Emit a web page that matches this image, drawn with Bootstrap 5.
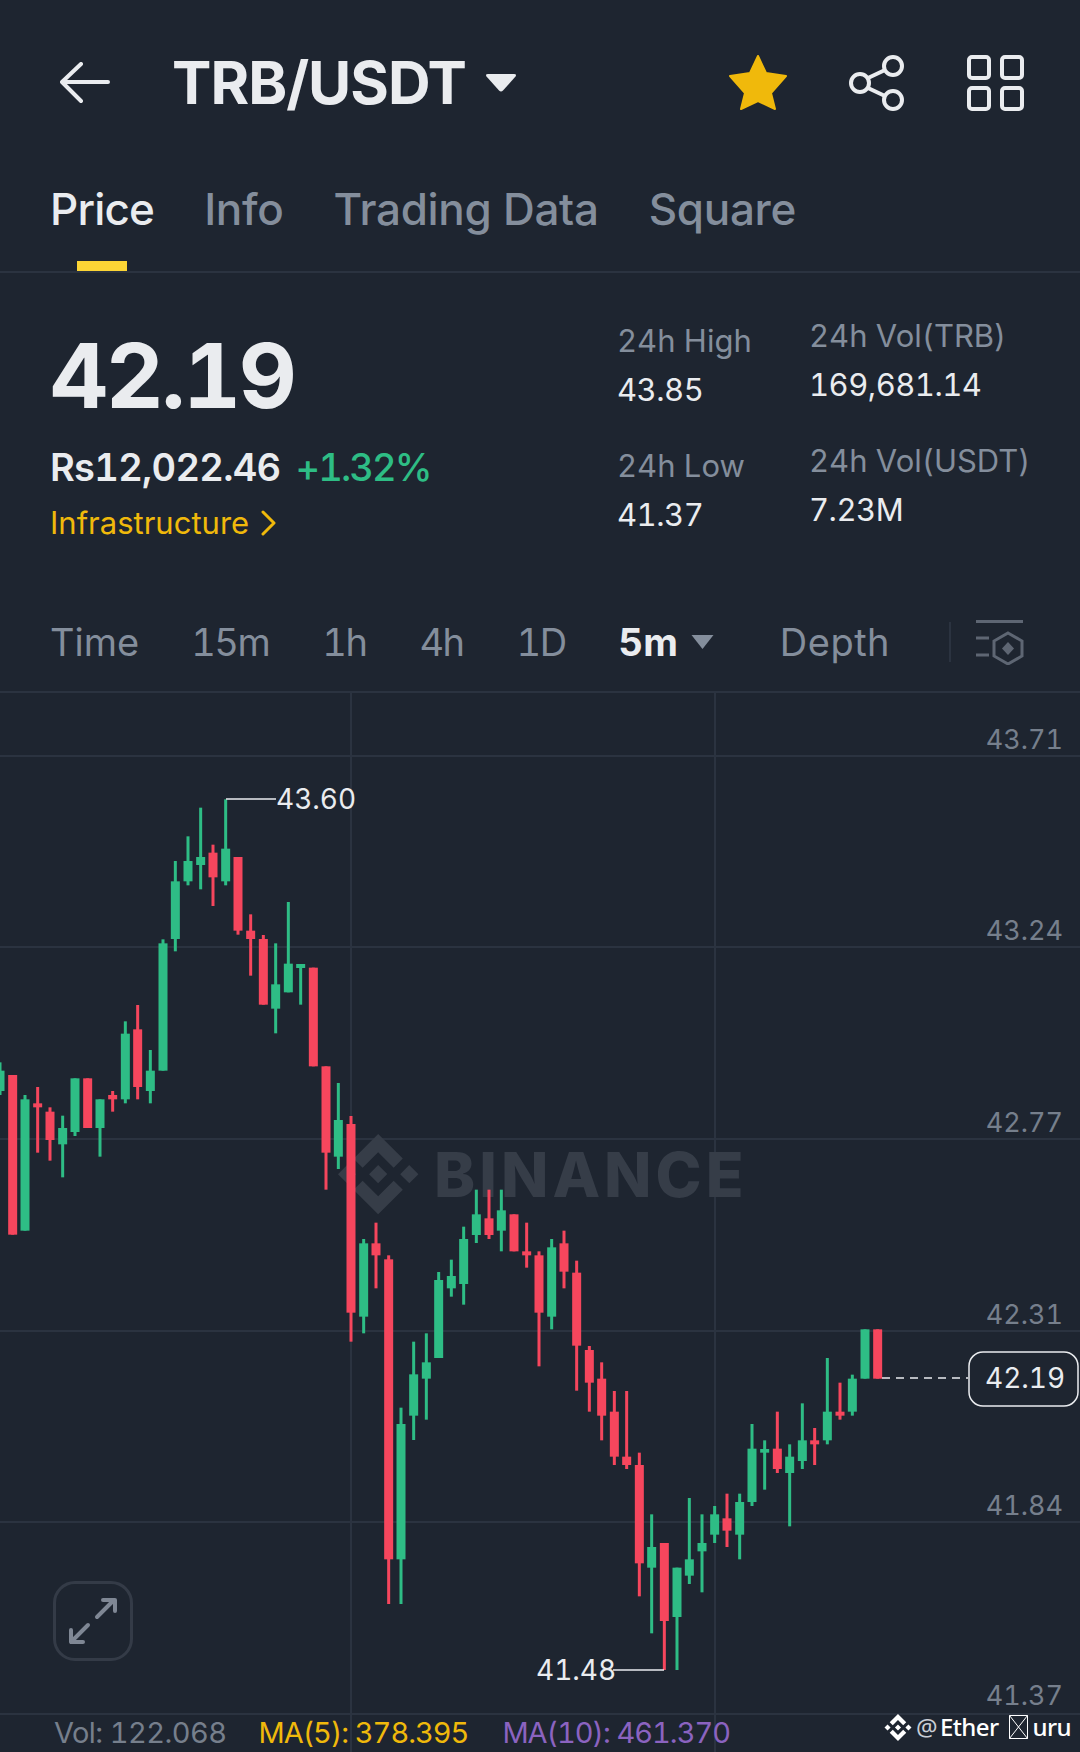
<!DOCTYPE html>
<html lang="en">
<head>
  <meta charset="UTF-8">
  <title>TRB/USDT</title>
  <link href="https://cdn.jsdelivr.net/npm/bootstrap@5.3.3/dist/css/bootstrap.min.css" rel="stylesheet">
  <style>
    html, body { margin: 0; background: #1e2530; }
    body { width: 1080px; height: 1752px; overflow: hidden; font-family: Inter, "Noto Sans", sans-serif; color: #eaecef; font-variant-numeric: tabular-nums; }
    svg { display: block; }
    .top-head { height: 166px; padding: 0 56px 0 60px; }
    .pair-name { font-size: 59px; line-height: 60px; font-weight: 700; letter-spacing: -1px; margin-left: 62px; }
    .pair-caret { margin-left: 20px; }
    .head-gap { margin-left: 60px; }
    .tab-strip { height: 107px; border-bottom: 2px solid #2b3340; padding-left: 50px; gap: 50px; }
    .tab-item { font-size: 44px; line-height: 52px; font-weight: 500; color: #848e9c; position: relative; height: 105px; padding-top: 17px; letter-spacing: -.3px; }
    .tab-item.on { color: #eaecef; letter-spacing: -.8px; }
    .tab-item.on::after { content: ""; position: absolute; left: 27px; bottom: 0; width: 50px; height: 10px; background: #fcd535; }
    .stat-wrap { height: 320px; padding: 0 0 0 50px; }
    .price-col { width: 567px; padding-top: 59px; }
    .big-price { font-size: 90px; line-height: 88px; font-weight: 700; letter-spacing: -2.5px; }
    .sub-line { font-size: 38px; line-height: 46px; margin-top: 24px; font-weight: 600; letter-spacing: -.7px; }
    .sub-line .up { color: #2ebd85; font-weight: 500; margin-left: 15px; letter-spacing: -1.9px; }
    .cat-link { color: #f0b90b; font-size: 31px; line-height: 40px; margin-top: 13px; gap: 12px; }
    .stat-one { width: 192px; padding-top: 48px; }
    .stat-two { padding-top: 43px; }
    .stat-label { color: #848e9c; font-size: 31px; line-height: 40px; }
    .stat-val { color: #eaecef; font-size: 31px; line-height: 40px; margin: 9px 0 36px; letter-spacing: -.5px; }
    .range-row { height: 100px; border-bottom: 2px solid #2b3340; padding-left: 50px; position: relative; }
    .range-item { color: #848e9c; font-size: 38px; line-height: 46px; white-space: nowrap; }
    .range-item.on { color: #eaecef; font-weight: 700; }
    .range-row .gap-time { margin-right: 52px; }
    .range-row .gap-num { margin-right: 53px; letter-spacing: -1.5px; }
    .range-caret { margin: 0 66px 0 13px; }
    .range-item.depth-link { letter-spacing: .5px; }
    .range-sep { width: 2px; height: 40px; background: #2b3340; margin: 0 25px 0 59px; }
    .chart-wrap { position: relative; height: 1059px; }
    .chart-svg { position: absolute; left: 0; top: 0; }
    .axis-txt { fill: #767f8c; font-size: 27px; font-family: Inter, sans-serif; }
    .mark-txt { fill: #eaecef; font-size: 28px; font-family: Inter, sans-serif; }
    .brand-word { fill: #363d48; font-size: 62px; font-weight: 800; letter-spacing: 4px; font-family: Inter, sans-serif; }
    .zoom-btn { position: absolute; left: 53px; top: 888px; width: 80px; height: 80px; border: 3px solid #343b47; border-radius: 22px; padding: 0; }
    .legend-row { position: absolute; left: 54px; bottom: 0; height: 38px; font-size: 29px; line-height: 38px; gap: 32px; white-space: nowrap; }
    .leg-vol { color: #767f8c; letter-spacing: -.55px; }
    .leg-five { color: #f0b90b; letter-spacing: -1px; }
    .leg-ten { color: #8b63c0; letter-spacing: -1px; margin-left: 2px; }
    .tag-mark { position: absolute; left: 884px; top: 1018px; height: 32px; color: #fff; font-size: 24px; line-height: 32px; letter-spacing: -.6px; white-space: nowrap; font-family: "Noto Sans", sans-serif; font-weight: 500; }
    .tag-at { color: #c9ced6; margin: 0 3px 0 4px; font-weight: 400; }
    .tag-box { margin: 0 5px 0 10px; }
  </style>
</head>
<body>
  <!-- top bar -->
  <div class="top-head d-flex align-items-center">
    <svg width="50" height="42" viewBox="59 63 50 42" fill="none" stroke="#eaecef" stroke-width="4" stroke-linecap="round" stroke-linejoin="round"><path d="M107 83H62M80 65 61 83 80 102"/></svg>
    <div class="pair-name">TRB/USDT</div>
    <svg class="pair-caret" width="30" height="18" viewBox="0 0 30 18"><path d="M2 0h26q3 0 1.500 2.500L17 16.500q-2 2-4 0L.5 2.500Q-1 0 2 0z" fill="#eaecef"/></svg>
    <div class="ms-auto d-flex align-items-center">
      <svg width="60" height="56" viewBox="728 56 60 56"><path d="M758 57l8 17 20 3-15 17 4 16-17-8-17 8 4-16-15-17 20-3z" fill="#f0b90b" stroke="#f0b90b" stroke-width="2" stroke-linejoin="round"/></svg>
      <svg class="head-gap" width="58" height="58" viewBox="848 55 58 58" fill="none" stroke="#eaecef" stroke-width="4"><circle cx="893" cy="67" r="9"/><circle cx="860" cy="84" r="9"/><circle cx="893" cy="101" r="9"/><path d="M868 79l17-8M868 89l17 8"/></svg>
      <svg class="head-gap" width="58" height="58" viewBox="966 55 58 58" fill="none" stroke="#eaecef" stroke-width="4"><rect x="969" y="58" width="20" height="21" rx="3"/><rect x="1002" y="58" width="20" height="21" rx="3"/><rect x="969" y="89" width="20" height="21" rx="3"/><rect x="1002" y="89" width="20" height="21" rx="3"/></svg>
    </div>
  </div>

  <!-- tabs -->
  <div class="tab-strip d-flex">
    <div class="tab-item on">Price</div>
    <div class="tab-item">Info</div>
    <div class="tab-item">Trading Data</div>
    <div class="tab-item">Square</div>
  </div>

  <!-- price block -->
  <div class="stat-wrap d-flex">
    <div class="price-col">
      <div class="big-price">42.19</div>
      <div class="sub-line">Rs12,022.46<span class="up">+1.32%</span></div>
      <div class="cat-link d-flex align-items-center">Infrastructure
        <svg width="16" height="26" viewBox="0 0 16 26" fill="none" stroke="#f0b90b" stroke-width="3" stroke-linecap="round" stroke-linejoin="round"><path d="M2 2l11 11L2 24"/></svg>
      </div>
    </div>
    <div class="stat-one">
      <div class="stat-label">24h High</div>
      <div class="stat-val">43.85</div>
      <div class="stat-label">24h Low</div>
      <div class="stat-val">41.37</div>
    </div>
    <div class="stat-two">
      <div class="stat-label">24h Vol(TRB)</div>
      <div class="stat-val">169,681.14</div>
      <div class="stat-label">24h Vol(USDT)</div>
      <div class="stat-val">7.23M</div>
    </div>
  </div>

  <!-- intervals -->
  <div class="range-row d-flex align-items-center">
    <span class="range-item gap-time">Time</span>
    <span class="range-item gap-num">15m</span>
    <span class="range-item gap-num">1h</span>
    <span class="range-item gap-num">4h</span>
    <span class="range-item gap-num">1D</span>
    <span class="range-item on">5m</span>
    <svg class="range-caret" width="23" height="14" viewBox="0 0 22 14"><path d="M0 0h22L11 14z" fill="#848e9c"/></svg>
    <span class="range-item depth-link">Depth</span>
    <span class="range-sep"></span>
    <svg width="48" height="46" viewBox="975 619 48 46" fill="none" stroke="#5e6673" stroke-width="3"><path d="M975 621.500h47M975 638h13M975 655h13"/><path d="M1007 633l14 8v15l-14 8-14-8v-15z"/><path d="M1007 642l6 6.500-6 6.500-6-6.500z" fill="#5e6673" stroke="none"/></svg>
  </div>

  <!-- chart -->
  <div class="chart-wrap">
    <svg id="chart" class="chart-svg" width="1080" height="1059" viewBox="0 693 1080 1059">
      <g stroke="#2b3340" stroke-width="2">
        <path d="M0 756H1080M0 947H1080M0 1139H1080M0 1331H1080M0 1522H1080M0 1714H1080M351 693V1752M715 693V1752" fill="none"/>
      </g>
      <g fill="#363d48"><path transform="translate(338 1134) scale(3.35)" d="M16.624 13.9202l2.7175 2.7154-7.353 7.353-7.353-7.352 2.7175-2.7164 4.6355 4.6595 4.6356-4.6595zm4.6366-4.6366L24 12l-2.7154 2.7164L18.5682 12l2.6924-2.7164zm-9.272.001l2.7163 2.6914-2.7164 2.7174v-.001L9.2721 12l2.7164-2.7154zm-9.2722-.001L5.4088 12l-2.6914 2.6914L0 12l2.7164-2.7164zM11.9885.0115l7.353 7.329-2.7174 2.7154-4.6356-4.6356-4.6355 4.6595-2.7174-2.7154 7.353-7.353z"/></g>
      <text class="brand-word" x="434" y="1197">BINANCE</text>
      <g id="candles"></g>
      <g text-anchor="end">
        <text class="axis-txt" x="1063" y="749">43.71</text>
        <text class="axis-txt" x="1063" y="940">43.24</text>
        <text class="axis-txt" x="1063" y="1132">42.77</text>
        <text class="axis-txt" x="1063" y="1324">42.31</text>
        <text class="axis-txt" x="1063" y="1515">41.84</text>
        <text class="axis-txt" x="1063" y="1705">41.37</text>
      </g>
      <path d="M226 799H276M613 1670H664" stroke="#eaecef" stroke-width="1.500" fill="none"/>
      <text class="mark-txt" x="276" y="809">43.60</text>
      <text class="mark-txt" x="536" y="1680">41.48</text>
      <path d="M882 1378H968" stroke="#eaecef" stroke-width="1.500" stroke-dasharray="8 6" fill="none"/>
      <rect x="969" y="1352" width="109" height="54" rx="14" fill="#1e2530" stroke="#eaecef" stroke-width="1.500"/>
      <text class="mark-txt" x="985" y="1388">42.19</text>
    </svg>
    <button class="zoom-btn btn" type="button" aria-label="Expand">
      <svg width="74" height="74" viewBox="3 3 74 74" fill="none" stroke="#7f8794" stroke-width="4" stroke-linecap="round" stroke-linejoin="round"><path d="M44 36 61 19M50 19h12v11M35 44 18 61M18 49v12h12"/></svg>
    </button>
    <div class="legend-row d-flex">
      <span class="leg-vol">Vol: 122.068</span>
      <span class="leg-five">MA(5): 378.395</span>
      <span class="leg-ten">MA(10): 461.370</span>
    </div>
    <div class="tag-mark d-flex align-items-center">
      <svg width="28" height="27" viewBox="0 0 24 24" fill="#fff"><path d="M16.624 13.9202l2.7175 2.7154-7.353 7.353-7.353-7.352 2.7175-2.7164 4.6355 4.6595 4.6356-4.6595zm4.6366-4.6366L24 12l-2.7154 2.7164L18.5682 12l2.6924-2.7164zm-9.272.001l2.7163 2.6914-2.7164 2.7174v-.001L9.2721 12l2.7164-2.7154zm-9.2722-.001L5.4088 12l-2.6914 2.6914L0 12l2.7164-2.7164zM11.9885.0115l7.353 7.329-2.7174 2.7154-4.6356-4.6356-4.6355 4.6595-2.7174-2.7154 7.353-7.353z"/></svg>
      <span class="tag-at">@</span>
      <span>Ether</span>
      <svg class="tag-box" width="19" height="24" viewBox="0 0 19 24" fill="none" stroke="#fff" stroke-width="1"><path d="M.5.5h18v23H.5zM.5.5l18 23M18.500.5l-18 23"/></svg>
      <span>uru</span>
    </div>
  </div>

  <script>
    // candles read off the reference: [g|r, center, wick top, body top, body bottom, wick bottom]
    // each group is measured from its own crop, so offset and 1/3 scale get applied below
    const groups = [
      { ox: 0, oy: 780, rows: [
        "g 0 847 872 933 945", "r 38 885 885 1364 1364", "g 75 945 958 1352 1352", "r 113 921 970 982 1118",
        "r 150 982 995 1080 1142", "g 188 1007 1044 1093 1192", "g 225 895 895 1056 1068", "r 263 895 895 1044 1044",
        "g 300 958 958 1044 1130", "r 338 933 945 958 995", "g 376 724 761 958 970", "r 413 675 748 921 958",
        "g 451 810 872 933 970", "g 489 478 490 872 872", "g 526 243 304 477 514", "g 564 169 243 304 316",
        "g 602 83 231 255 328", "r 639 194 218 292 378", "g 677 58 206 304 316", "r 714 231 231 452 464",
        "r 752 403 452 477 587", "r 790 465 477 674 674", "g 827 490 613 686 760", "g 865 366 551 637 637",
        "g 902 552 552 564 674", "r 940 563 563 859 859", "r 978 859 859 1118 1229", "g 1015 909 1020 1130 1167"
      ] },
      { ox: 340, oy: 1090, rows: [
        "r 33 78 102 668 755", "g 71 447 460 680 730", "r 108 398 460 496 595", "r 146 496 508 1408 1542",
        "g 183 953 1002 1408 1542", "g 221 755 853 977 1050", "g 259 730 817 866 989", "g 296 546 570 804 804",
        "g 334 509 558 595 620", "g 371 410 447 582 644", "g 409 299 373 435 459", "r 447 299 385 435 447",
        "g 484 299 361 422 484", "r 522 373 373 484 484", "r 560 398 484 496 533", "r 597 484 496 668 829",
        "g 635 447 472 680 718", "r 672 422 460 545 595"
      ] },
      { ox: 560, oy: 1290, rows: [
        "r 50 -88 -52 167 302", "r 88 168 180 278 365", "r 125 217 266 377 451", "r 163 303 365 500 525",
        "r 200 303 500 525 537", "r 238 488 525 820 919", "g 275 673 771 833 1030", "r 313 759 759 993 1140",
        "g 351 833 833 981 1140", "g 388 624 808 857 882", "g 426 673 759 784 907", "g 464 648 673 734 759",
        "r 501 611 685 722 771", "g 539 611 636 734 808", "g 576 402 476 636 648", "g 614 451 477 488 599",
        "r 652 365 476 537 549", "g 689 463 500 549 709", "g 727 340 451 513 537", "r 764 414 451 463 525",
        "g 802 204 365 451 463", "r 840 278 365 377 389", "g 877 254 266 365 377", "g 915 118 118 266 266",
        "r 953 118 118 266 266"
      ] }
    ];
    const colors = { g: "#2ebd85", r: "#f6465d" };
    let out = "";
    groups.forEach(grp => {
      grp.rows.forEach(row => {
        const p = row.split(" ");
        const cx = grp.ox + p[1] / 3;
        const y = p.slice(2).map(v => grp.oy + v / 3);
        out += `<rect x="${cx - 1.5}" y="${y[0]}" width="3" height="${y[3] - y[0]}" fill="${colors[p[0]]}"/>`;
        out += `<rect x="${cx - 4.5}" y="${y[1]}" width="9" height="${y[2] - y[1]}" fill="${colors[p[0]]}"/>`;
      });
    });
    document.getElementById("candles").innerHTML = out;
  </script>
  <script src="https://cdn.jsdelivr.net/npm/bootstrap@5.3.3/dist/js/bootstrap.bundle.min.js"></script>
</body>
</html>
